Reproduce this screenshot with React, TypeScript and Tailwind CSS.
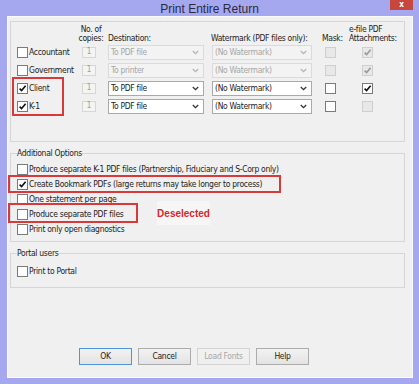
import { ReactNode } from 'react';

const Chevron = ({ disabled }: { disabled?: boolean }) => (
  <svg width="7" height="5" viewBox="0 0 7 5" className="shrink-0">
    <path d="M0.8 1 L3.5 3.7 L6.2 1" fill="none" stroke={disabled ? '#b4b4b4' : '#333'} strokeWidth="1.3" />
  </svg>
);

const Check = ({ color = '#111' }: { color?: string }) => (
  <svg width="9" height="9" viewBox="0 0 9 9">
    <path d="M1.6 4.6 L3.6 6.6 L7.6 1.8" fill="none" stroke={color} strokeWidth="1.6" />
  </svg>
);

const Box = ({ checked, disabled }: { checked?: boolean; disabled?: boolean }) => (
  <div
    className={`w-[11px] h-[11px] shrink-0 flex items-center justify-center border ${
      disabled ? 'border-[#cfcfcf] bg-[#e8e8e8]' : 'border-[#7a7a7a] bg-white'
    }`}
  >
    {checked && <Check color={disabled ? '#9a9a9a' : '#111'} />}
  </div>
);

const Select = ({ value, width, disabled }: { value: string; width: string; disabled?: boolean }) => (
  <div
    className={`${width} h-[15px] flex items-center justify-between pl-[2px] pr-[4px] border ${
      disabled ? 'border-[#dadada] bg-[#f3f3f3] text-[#a6a6a6]' : 'border-[#a9a9a9] bg-white text-[#1a1a1a]'
    }`}
  >
    <span className="truncate">{value}</span>
    <Chevron disabled={disabled} />
  </div>
);

interface RowProps {
  label: string;
  checked?: boolean;
  dest: string;
  enabled?: boolean;
  efile: 'on' | 'grayOn' | 'off';
}

const PrintRow = ({ label, checked, dest, enabled, efile }: RowProps) => (
  <div className="flex items-center h-[18px]">
    <div className="w-[65px] flex items-center gap-[1px]">
      <Box checked={checked} />
      <span>{label}</span>
    </div>
    <div className="w-[14px] h-[11px] border border-[#d6d6d6] bg-[#f4f4f4] text-[#9c9c9c] text-[8px] flex items-center justify-center">
      1
    </div>
    <div className="w-[12px]" />
    <Select value={dest} width="w-[96px]" disabled={!enabled} />
    <div className="w-[8px]" />
    <Select value="(No Watermark)" width="w-[100px]" disabled={!enabled} />
    <div className="w-[13px]" />
    <Box disabled={!enabled} />
    <div className="w-[26px]" />
    <Box checked={efile !== 'off'} disabled={efile !== 'on'} />
  </div>
);

const Option = ({ label, checked }: { label: string; checked?: boolean }) => (
  <div className="flex items-center h-[15px] gap-[1px]">
    <Box checked={checked} />
    <span className="whitespace-nowrap">{label}</span>
  </div>
);

const Group = ({ title, children, className }: { title: string; children: ReactNode; className: string }) => (
  <fieldset className={`border border-[#d6d6d6] pl-[6px] ${className}`}>
    <legend className="px-[0px] leading-[10px] text-[#222]">{title}</legend>
    {children}
  </fieldset>
);

const Button = ({ label, primary, disabled }: { label: string; primary?: boolean; disabled?: boolean }) => (
  <div
    className={`w-[53px] h-[17px] flex items-center justify-center border bg-gradient-to-b ${
      primary
        ? 'border-[#4f93d8] from-[#f2f2f2] to-[#e3e3e3]'
        : disabled
        ? 'border-[#d3d3d3] text-[#a6a6a6] from-[#f2f2f2] to-[#eeeeee]'
        : 'border-[#acacac] from-[#f2f2f2] to-[#e3e3e3]'
    }`}
  >
    {label}
  </div>
);

export default function App() {
  return (
    <div className="relative w-[419px] h-[384px] bg-[#a6a8ef] flex flex-col text-[8.5px] tracking-[-0.3px] text-[#1c1c1c] font-['DejaVu_Sans_Condensed','Liberation_Sans',sans-serif]">
      {/* title bar */}
      <div className="relative h-[16px] flex items-center justify-center">
        <span className="text-[12px] tracking-normal text-[#2a2a3c] font-['Liberation_Sans',sans-serif] mt-[1px]">
          Print Entire Return
        </span>
        <div className="absolute right-[6px] top-0 w-[23px] h-[10px] bg-[#c7463d] flex items-center justify-center">
          <span className="text-white text-[8px] leading-none font-bold">x</span>
        </div>
      </div>

      {/* client area */}
      <div className="flex-1 ml-[7px] mr-[6px] mb-[6px] bg-[#f0f0f0] border border-[#fbfbfb] flex flex-col pl-[2px] pr-[7px]">
        {/* recipients */}
        <div className="mt-[4px] h-[121px] border border-[#d6d6d6] pl-[6px] pt-[3px]">
          <div className="flex items-end h-[18px] text-[#222] leading-[9px] whitespace-nowrap">
            <div className="w-[59px]" />
            <div className="w-[30px] text-center">
              No. of
              <br />
              copies:
            </div>
            <div className="w-[2px]" />
            <div className="w-[103px]">Destination:</div>
            <div className="w-[111px]">Watermark (PDF files only):</div>
            <div className="w-[27px]">Mask:</div>
            <div>
              e-file PDF
              <br />
              Attachments:
            </div>
          </div>
          <PrintRow label="Accountant" dest="To PDF file" efile="grayOn" />
          <PrintRow label="Government" dest="To printer" efile="grayOn" />
          <PrintRow label="Client" checked dest="To PDF file" enabled efile="on" />
          <PrintRow label="K-1" checked dest="To PDF file" enabled efile="off" />
        </div>

        <Group title="Additional Options" className="mt-[6px] pb-[4px]">
          <div className="pt-[4px]">
            <Option label="Produce separate K-1 PDF files (Partnership, Fiduciary and S-Corp only)" />
            <Option label="Create Bookmark PDFs (large returns may take longer to process)" checked />
            <Option label="One statement per page" />
            <Option label="Produce separate PDF files" />
            <Option label="Print only open diagnostics" />
          </div>
        </Group>

        <Group title="Portal users" className="mt-[6px] pb-[8px]">
          <div className="pt-[6px]">
            <Option label="Print to Portal" />
          </div>
        </Group>

        <div className="mt-auto mb-[12px] ml-[69px] flex gap-[6px]">
          <Button label="OK" primary />
          <Button label="Cancel" />
          <Button label="Load Fonts" disabled />
          <Button label="Help" />
        </div>
      </div>

      {/* annotations */}
      <div className="absolute left-[12px] top-[77px] w-[52px] h-[39px] border-2 border-[#d8393b]" />
      <div className="absolute left-[8px] top-[175px] w-[273px] h-[18px] border-2 border-[#d8393b]" />
      <div className="absolute left-[8px] top-[203px] w-[130px] h-[20px] border-2 border-[#d8393b]" />
      <div className="absolute left-[157px] top-[201px] w-[53px] h-[24px] bg-[#f6f6f6] flex items-center justify-center">
        <span className="text-[#d3262b] font-bold text-[10px] tracking-normal font-['Liberation_Sans',sans-serif]">
          Deselected
        </span>
      </div>
    </div>
  );
}
